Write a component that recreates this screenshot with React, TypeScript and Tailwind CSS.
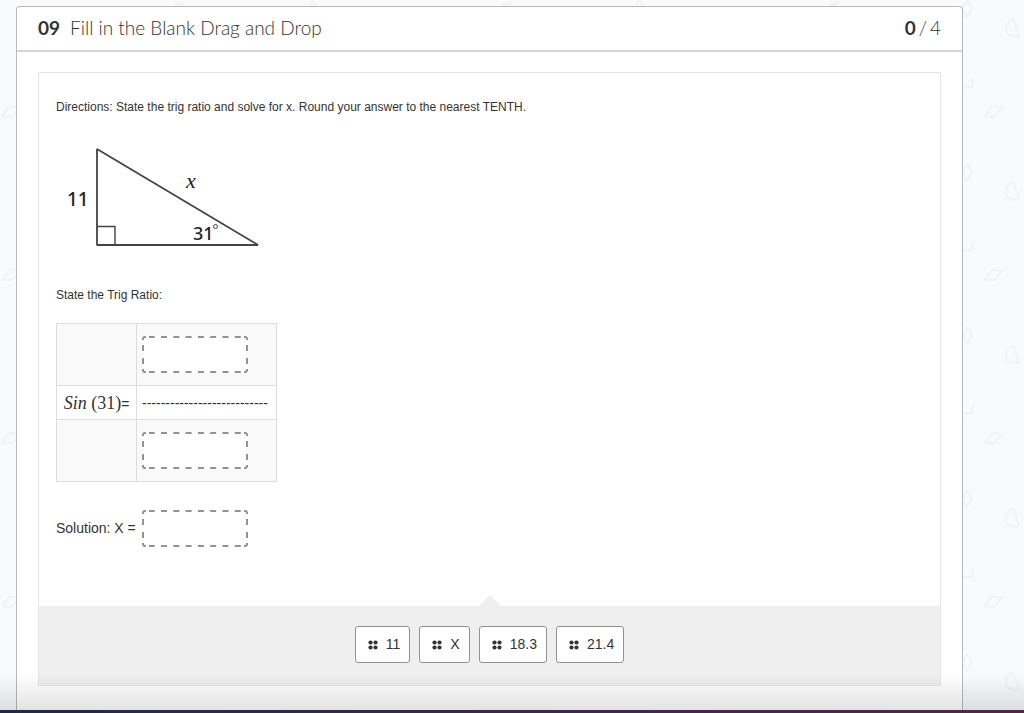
import clsx from 'clsx';

const answers = ['11', 'X', '18.3', '21.4'];

function BackgroundPattern() {
  return (
    <svg className="absolute inset-0 h-full w-full" aria-hidden="true">
      <defs>
        <pattern id="shapes" width="327.500" height="163.400" patternUnits="userSpaceOnUse">
          <g fill="none" stroke="#f1f2f3" strokeWidth="2" strokeLinejoin="round" strokeLinecap="round">
            <path d="M2 116 10 106 20 107.500 12 116.500Z" />
            <path d="M29 19C23 23 21 32 27 35Q31 37 36 36Q37 35 35 31L31 20Q30 18 29 19Z" />
            <path d="M312 .5 307 9 312 17 317 8.500Z" />
            <path d="M175 5 183 2 182 6Z" />
            <path d="M307 92 308 86.500 317 87 318 79" />
          </g>
        </pattern>
      </defs>
      <rect width="100%" height="100%" fill="url(#shapes)" />
    </svg>
  );
}

function Triangle() {
  return (
    <svg width="220" height="116" viewBox="0 0 220 116" role="img" aria-label="Right triangle">
      <g fill="none" stroke="#444">
        <path d="M41 10V106H202Z" strokeWidth="1.800" strokeLinejoin="bevel" />
        <path d="M41 87.500H59V105" strokeWidth="1.400" />
        <circle cx="159.500" cy="87.500" r="2" strokeWidth="1" />
      </g>
      <g fill="#222" fontWeight="500">
        <text x="11" y="67" fontSize="19" fontFamily="'Noto Sans', sans-serif">11</text>
        <text x="137" y="101" fontSize="18" fontFamily="'Noto Sans', sans-serif">31</text>
        <text x="130" y="49" fontSize="22" fontStyle="italic" fontFamily="'Liberation Serif', serif">x</text>
      </g>
    </svg>
  );
}

function DropZone({ label, filled }: { label: string; filled?: boolean }) {
  return (
    <button type="button" aria-label={label} className={clsx('block h-[37px] w-[106px]', filled && 'bg-white')}>
      <svg className="h-full w-full" viewBox="0 0 106 37" fill="none" stroke="#929292" strokeWidth="2">
        <path d="M1 4V3Q1 1 3 1H4M102 1h1Q105 1 105 3V4M105 33v1Q105 36 103 36H102M4 36H3Q1 36 1 34V33" />
        <path d="M7 1H99M7 36H99" strokeDasharray="6 6.300" strokeDashoffset="-12" />
        <path d="M1 9V31M105 9V31" strokeDasharray="6 7" />
      </svg>
    </button>
  );
}

function Grip() {
  return (
    <svg width="10" height="10" viewBox="0 0 10 10" fill="#333" aria-hidden="true">
      <circle cx="2.500" cy="2.500" r="2.100" />
      <circle cx="7.500" cy="2.500" r="2.100" />
      <circle cx="2.500" cy="7.500" r="2.100" />
      <circle cx="7.500" cy="7.500" r="2.100" />
    </svg>
  );
}

export default function App() {
  return (
    <div className="relative flex min-h-screen flex-col bg-[#f9fafc] pt-1.5 pr-[61px] pl-4 font-['Liberation_Sans',sans-serif] text-[#333]">
      <BackgroundPattern />
      <main className="relative grow rounded-t border border-b-0 border-[#b9b9b9] bg-white">
        <header className="flex h-[45px] items-center justify-between border-b-2 border-[#d4d4d4] px-[21px] font-['Lato',sans-serif] text-[19px] font-light">
          <h1 className="flex gap-2.5">
            <span className="font-bold">09</span>
            Fill in the Blank Drag and Drop
          </h1>
          <p className="flex gap-[3px]">
            <span className="font-bold">0</span>
            <span>/</span>
            <span>4</span>
          </p>
        </header>

        <section className="mx-[21px] mt-5 border border-[#e5e5e5]">
          <div className="px-[17px] pt-6 pb-[59px]">
            <p className="text-[12px] leading-5">
              Directions: State the trig ratio and solve for x. Round your answer to the nearest TENTH.
            </p>
            <div className="mt-[22px]">
              <Triangle />
            </div>
            <p className="mt-[30px] text-[12px] leading-5">State the Trig Ratio:</p>

            <table className="mt-[18px] border-collapse">
              <tbody>
                <tr className="h-[62px] bg-[#f9f9f9]">
                  <td className="w-20 border border-[#ddd]" />
                  <td className="w-[140px] border border-[#ddd] px-[5px]">
                    <DropZone label="Numerator" filled />
                  </td>
                </tr>
                <tr className="h-[34px]">
                  <th scope="row" className="border border-[#ddd] pt-0.5 text-[14px] font-normal whitespace-nowrap">
                    <span className="font-['Liberation_Serif',serif] text-[18px]">
                      <i>Sin</i> (31)
                    </span>
                    =
                  </th>
                  <td className="border border-[#ddd] px-[5px] pt-0.5 text-[14px] whitespace-nowrap">
                    ---------------------------
                  </td>
                </tr>
                <tr className="h-[62px] bg-[#f9f9f9]">
                  <td className="border border-[#ddd]" />
                  <td className="border border-[#ddd] px-[5px]">
                    <DropZone label="Denominator" filled />
                  </td>
                </tr>
              </tbody>
            </table>

            <div className="mt-7 flex items-center gap-1.5 text-[14px]">
              <span>Solution: X =</span>
              <DropZone label="Solution" />
            </div>
          </div>

          <div className="relative flex h-[79px] items-center justify-center gap-[9px] bg-[#efefef] pb-0.5">
            <svg className="absolute bottom-full left-1/2 -translate-x-1/2" width="22" height="11" aria-hidden="true">
              <path d="M0 11 11 0 22 11Z" fill="#efefef" />
            </svg>
            {answers.map(answer => (
              <button
                key={answer}
                type="button"
                className="flex h-[37px] items-center gap-2 rounded-[3px] border border-[#929292] bg-white pr-[9px] pl-3 text-[14px]"
              >
                <Grip />
                {answer}
              </button>
            ))}
          </div>
        </section>
      </main>

      <div className="pointer-events-none fixed inset-x-0 bottom-0">
        <div className="h-9 bg-gradient-to-b from-transparent to-black/11" />
        <div className="h-[3px] bg-gradient-to-r from-[#20284a] to-[#55244a]" />
      </div>
    </div>
  );
}
